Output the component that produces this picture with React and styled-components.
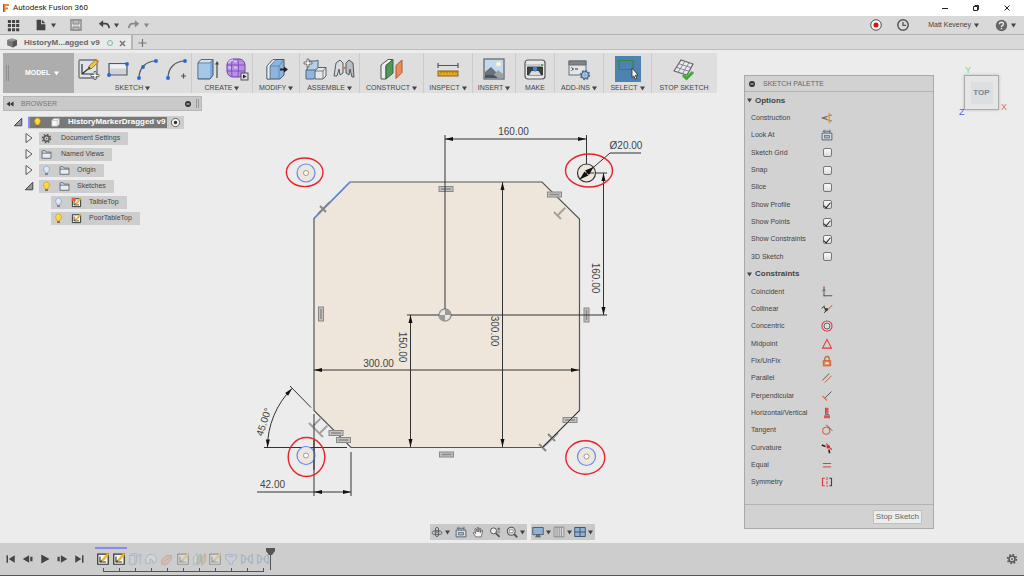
import React, { useState } from "react";
import styled, { createGlobalStyle } from "styled-components";

const GlobalStyle = createGlobalStyle`
  * {
    box-sizing: border-box;
  }

  body {
    margin: 0;
    background: #ececec;
    color: #444;
    font-family: "Liberation Sans", Arial, sans-serif;
    font-size: 7px;
    line-height: 8px;
  }

  button {
    padding: 0;
    border: 0;
    background: none;
    color: inherit;
    font: inherit;
    cursor: pointer;
  }

  ul {
    margin: 0;
    padding: 0;
    list-style: none;
  }

  svg {
    display: block;
    flex: none;
  }
`;

/* ---------- icons ---------- */

const Svg = ({ w = 16, h = w, box = 16, children }) => (
  <svg
    width={w}
    height={h}
    viewBox={`0 0 ${box} ${(box * h) / w}`}
    fill="none"
    stroke="#555"
    aria-hidden="true"
  >
    {children}
  </svg>
);

const Caret = () => (
  <svg width="5" height="5" viewBox="0 0 5 5" fill="currentColor" aria-hidden="true">
    <path d="M0 .5h5L2.5 4.500z" />
  </svg>
);

const Pencil = () => (
  <>
    <path d="M11 12.5l1-3.5 7-6.5 2.5 2.5-7 6.5z" fill="#f5c53c" stroke="#8a6a2a" strokeWidth=".8" />
    <path d="M11 12.5l1-3 2 2z" fill="#333" stroke="none" />
    <path d="M18 3.5l1.6-1.5 2.4 2.4-1.6 1.5z" fill="#d97b4a" stroke="none" />
  </>
);

const Node = ({ x, y }) => (
  <rect x={x - 1.7} y={y - 1.7} width="3.4" height="3.4" rx=".8" fill="#2563d8" stroke="none" />
);

const Plus = ({ x, y }) => (
  <path
    d={`M${x - 1} ${y - 4}h2v3h3v2h-3v3h-2v-3h-3v-2h3z`}
    fill="#fff"
    stroke="#555"
    strokeWidth=".8"
  />
);

const toolIcons = {
  sketch: (
    <>
      <rect x="2" y="3" width="18" height="18" rx="1" fill="#dfe4e9" stroke="#6d7278" strokeWidth="1.3" />
      <path d="M5 7v10h11M5 17l6-5" stroke="#333" strokeWidth="1.2" />
      <Pencil />
      <Plus x={18} y={18.5} />
    </>
  ),
  rect: (
    <>
      <path d="M3 6.5h18V18H3z" fill="#cfd4d9" stroke="#555a60" strokeWidth="1.2" />
      <path d="M4 7.500h16v4H4z" fill="#eef0f2" stroke="none" />
      <Node x={3} y={18} />
      <Node x={21} y={7} />
    </>
  ),
  arc: (
    <>
      <path d="M4 21C4 11 11 4 21 4" strokeWidth="1.2" />
      <Node x={4} y={21} />
      <Node x={8} y={10} />
      <Node x={21} y={4} />
    </>
  ),
  fillet: (
    <>
      <path d="M4 21C4 11 11 4 21 4M17 19h5M19.5 16.5v5" strokeWidth="1.2" />
      <Node x={4} y={21} />
      <Node x={21} y={4} />
    </>
  ),
  extrude: (
    <>
      <path d="M2 6l3-3.5h12V18l-3 4H2z" fill="#7faedb" stroke="#3d5670" />
      <path d="M2 6l3-3.5h12L14 6z" fill="#cfe1f2" stroke="#3d5670" strokeWidth=".7" />
      <path d="M2.5 6.5H14V21H2.5z" fill="#a5c8e9" stroke="none" />
      <path d="M21 21V6" strokeWidth="1.3" />
      <path d="M19 7.5L21 4l2 3.5z" fill="#444" stroke="none" />
    </>
  ),
  form: (
    <>
      <rect x="2" y="2" width="18" height="18" rx="6" fill="#b98fe6" stroke="#6b3fa5" />
      <path d="M7 3q-1 8 0 17M13 2.500q1 9 0 17M2 8h18M2 14h18" stroke="#7c4cba" strokeWidth=".9" />
      <path d="M3.5 6Q5 3 8 3M9 4.500h3M3 10.500h3M9 10.500h3" stroke="#e0c8fa" strokeWidth="1.5" />
      <rect x="16" y="16" width="7" height="7" fill="#ddd" stroke="#444" strokeWidth=".9" />
      <path d="M18 17.5l3.5 2-3.5 2z" fill="#222" stroke="none" />
    </>
  ),
  pressPull: (
    <>
      <path d="M3 9l6-6.5h11V18l-4 4H3z" fill="#8bb5de" stroke="#44566a" />
      <path d="M3 9l6-6.5h3L6 9v13H3z" fill="#eef1f4" stroke="#5b6570" strokeWidth=".8" />
      <path d="M6 9h9l5-6.500M15 9v13" stroke="#5a7da1" strokeWidth=".8" />
      <path d="M16 12.5h5" stroke="#222" strokeWidth="2" />
      <path d="M20 9.5l4 3-4 3z" fill="#222" stroke="none" />
    </>
  ),
  component: (
    <>
      <path d="M3 13l3-3h7v10l-2 2H3z" fill="#8fb6dc" stroke="#50657c" />
      <path d="M5 4h8l2-1v8l-2 2H4z" fill="#b7d0ea" stroke="#50657c" />
      <path d="M12 14l3-3.5h8V19l-3 3h-8z" fill="#e5e7ea" stroke="#5d6369" />
      <path d="M12 14h8l3-3.500M20 14v8" stroke="#5d6369" strokeWidth=".8" />
      <Plus x={5} y={6} />
    </>
  ),
  joint: (
    <>
      <path d="M2 19l2-13 4-3 3 3v10l-3 2-1-6-2 7z" fill="#d8dbdf" stroke="#54595f" />
      <path d="M22 20l-1-14-4-3-3 3v10l3 2 1-6 2 8z" fill="#b9bec5" stroke="#54595f" />
      <path d="M11 12l3-2" stroke="#df7430" strokeWidth="1.8" />
    </>
  ),
  plane: (
    <>
      <path d="M1 8l7-5.5h5L6 8.5V22H1z" fill="#eceef0" stroke="#555" />
      <path d="M6 8.5l7-6V16l-7 6z" fill="#4d9a58" stroke="#32683a" />
      <path d="M16 8.5l6-5.5v12.5l-6 6z" fill="#ef8b57" stroke="#a4593a" />
    </>
  ),
  measure: (
    <>
      <path d="M2 8.5h20M2 6v5M22 6v5" strokeWidth="1.2" />
      <rect x="2" y="14" width="20" height="5" fill="#e9a91d" stroke="#8a6410" />
      <path d="M5 14v2.500M8 14v2M11 14v2.500M14 14v2M17 14v2.500M20 14v2" stroke="#7a5506" strokeWidth=".7" />
    </>
  ),
  image: (
    <>
      <rect x="2" y="2" width="20" height="20" fill="#c3daee" stroke="#666b70" strokeWidth="1.3" />
      <path d="M3 15l6-5 7 7v4H3z" fill="#6a7178" stroke="none" />
      <path d="M9 21l7-8 5 4v4z" fill="#9aa1a8" stroke="none" />
      <path d="M3 18h9l4 3H3z" fill="#4c535a" stroke="none" />
      <circle cx="16.5" cy="7" r="2.3" fill="#fff6c9" stroke="none" />
    </>
  ),
  make: (
    <>
      <rect x="2" y="3" width="20" height="19" rx="3" fill="#e7e8ea" stroke="#55595d" strokeWidth="1.2" />
      <path d="M3 8h18" stroke="#999" strokeWidth=".8" />
      <path d="M4.5 10h15v8h-15z" fill="#3c4146" stroke="#222" strokeWidth=".8" />
      <path d="M6 18l2.500-4h7l2.500 4z" fill="#d9dbde" stroke="none" />
      <path d="M10 10h4v3l-2 2-2-2z" fill="#3e86cf" stroke="none" />
      <circle cx="19" cy="8" r="1" fill="#3ba33b" stroke="none" />
    </>
  ),
  script: (
    <>
      <rect x="2" y="4" width="17" height="14" fill="#e3e5e7" stroke="#6a7076" />
      <path d="M2 4h17v4H2z" fill="#7e858c" stroke="#666c72" />
      <path d="M4.5 10.5l2 1.500-2 1.500M8 12h3" stroke="#333" />
      <circle cx="18" cy="18" r="3.5" fill="#b9cfe6" stroke="#4c6f95" strokeWidth="1.5" />
      <circle cx="18" cy="18" r="4.5" stroke="#4c6f95" strokeWidth="1.5" strokeDasharray="1.7 1.8" />
      <circle cx="18" cy="18" r="1" fill="#fff" stroke="#4c6f95" strokeWidth=".7" />
    </>
  ),
  select: (
    <>
      <path d="M3 3.5h14v9H3z" stroke="#2d8b3f" strokeWidth="1.2" />
      <path d="M16 11l6 7-2.700.2 1.500 3.200-1.700.7-1.300-3.200-1.800 1.600z" fill="#fff" stroke="#333" strokeWidth=".9" />
    </>
  ),
  stop: (
    <>
      <path d="M2 14L9 3l12 4-6 11z" fill="#e9ebed" stroke="#62676c" strokeWidth="1.2" />
      <path d="M4.300 10.300l12.700 4M6.700 6.700L19 10.600M6 15.300L13 4.300M10.500 16.700L17 5.600" stroke="#7a7f84" strokeWidth=".9" />
      <path d="M11 18l3.500 3.500L21 15" stroke="#3faa2e" strokeWidth="3" />
    </>
  ),
};

const ToolIcon = ({ name }) => (
  <Svg w={24} box={24}>
    {toolIcons[name]}
  </Svg>
);

const smallIcons = {
  apps: (
    <path
      d="M2 2h3.300v3.300H2zM6.400 2h3.300v3.300H6.400zM10.800 2h3.300v3.300h-3.300zM2 6.400h3.300v3.300H2zM6.400 6.400h3.300v3.300H6.400zM10.800 6.400h3.300v3.300h-3.300zM2 10.800h3.300v3.300H2zM6.400 10.800h3.300v3.300H6.400zM10.800 10.800h3.300v3.300h-3.300z"
      fill="#444"
      stroke="none"
    />
  ),
  file: (
    <>
      <path d="M3 2h5v5h5v7H3z" fill="#444" stroke="none" />
      <path d="M9 2l4 4H9z" fill="#444" stroke="none" />
    </>
  ),
  save: (
    <>
      <path d="M3 3h10v10H3z" stroke="#888" strokeWidth="1.4" />
      <path d="M5 3h6v4H5zM5 10h6v3H5z" fill="#bbb" stroke="#888" />
    </>
  ),
  undo: (
    <>
      <path d="M5 6.5h5q3 0 4 5" stroke="#444" strokeWidth="2" />
      <path d="M7 2.5v8l-5-4z" fill="#444" stroke="none" />
    </>
  ),
  redo: (
    <>
      <path d="M11 6.5H6q-3 0-4 5" stroke="#888" strokeWidth="2" />
      <path d="M9 2.5v8l5-4z" fill="#888" stroke="none" />
    </>
  ),
  record: (
    <>
      <circle cx="8" cy="8" r="5.3" fill="#f4f4f4" />
      <circle cx="8" cy="8" r="2.5" fill="#e01010" stroke="none" />
    </>
  ),
  clock: (
    <>
      <circle cx="8" cy="8" r="5.2" strokeWidth="1.5" />
      <path d="M8 5v3.300h3" strokeWidth="1.3" />
    </>
  ),
  cube: (
    <>
      <path d="M1.5 4L8 2l6.500 2v7L9 14l-7.500-3z" fill="#777" stroke="none" />
      <path d="M1.5 4L8 2l6.500 2L9 6z" fill="#999" stroke="none" />
      <path d="M9 6l5.500-2v7L9 14z" fill="#555" stroke="none" />
    </>
  ),
  minus: (
    <>
      <circle cx="8" cy="8" r="6" fill="#333" stroke="none" />
      <path d="M5 8h6" stroke="#ddd" strokeWidth="2" />
    </>
  ),
  rewind: <path d="M8 3v10L1 8zM15 3v10L8 8z" fill="#333" stroke="none" />,
  closed: <path d="M4 2l8 6-8 6z" fill="#f4f4f4" strokeWidth="1.3" />,
  open: <path d="M13 3v10H3z" fill="#999" stroke="#444" strokeWidth="1.3" />,
  bulb: (
    <>
      <path d="M8 1.5a4.500 4.500 0 0 0-2.500 8L6 11.500h4l.5-2A4.500 4.500 0 0 0 8 1.500z" fill="#ffd93b" stroke="#c79a1c" />
      <path d="M6 12h4v2.500H6z" fill="#666" stroke="none" />
      <path d="M6.500 4.500l1-1" stroke="#fff" />
    </>
  ),
  bulbOff: (
    <>
      <path d="M8 1.5a4.500 4.500 0 0 0-2.500 8L6 11.500h4l.5-2A4.500 4.500 0 0 0 8 1.500z" fill="#dceafa" stroke="#7d9ac4" />
      <path d="M6 12h4v2.500H6z" fill="#777" stroke="none" />
    </>
  ),
  body: (
    <>
      <path d="M2.500 5l3-3h8v8.500l-3 3h-8z" fill="#f6f6f6" stroke="#aaa" />
      <path d="M2.500 5h8v8.500M10.500 5l3-3" stroke="#bbb" />
    </>
  ),
  folder: <path d="M1.500 13.500v-11H6l1.500 2h7v9zM1.500 6h13" fill="#e8ebef" stroke="#555d68" strokeWidth="1.2" />,
  gear: (
    <>
      <circle cx="8" cy="8" r="4" strokeWidth="2" />
      <circle cx="8" cy="8" r="6" strokeWidth="2" strokeDasharray="2.3 2.4" />
      <circle cx="8" cy="8" r="1.2" fill="#555" stroke="none" />
    </>
  ),
  sketchItem: (
    <>
      <path d="M2 2.500h12V14H2z" fill="#f4f6f8" stroke="#333" strokeWidth="1.4" />
      <path d="M4.500 5v6.500h7M5 11l4-3" stroke="#333" strokeWidth="1.2" />
      <path d="M7 10l7-8" stroke="#f0b41e" strokeWidth="2.6" />
    </>
  ),
  sketchFail: (
    <>
      <path d="M2 2.500h12V14H2z" fill="#f4f6f8" stroke="#333" strokeWidth="1.4" />
      <path d="M4.500 5v6.500h7M5 11l4-3" stroke="#333" strokeWidth="1.2" />
      <path d="M7 10l7-8" stroke="#f0b41e" strokeWidth="2.6" />
      <path d="M1 1h6v5H1z" fill="#d9643a" stroke="none" />
    </>
  ),
  target: (
    <>
      <circle cx="8" cy="8" r="6" fill="#f2f2f2" strokeWidth="1.3" />
      <circle cx="8" cy="8" r="2.5" fill="#333" stroke="none" />
    </>
  ),
  construction: (
    <>
      <path d="M14 4L2 8l12 4" stroke="#555" strokeWidth="1.4" />
      <path d="M11 1v14M8 6l6-2M8 10l6 2.500" stroke="#f09a35" strokeWidth="1.8" strokeDasharray="4 1" />
    </>
  ),
  lookAt: (
    <>
      <path d="M1.500 5.500h13v9h-13z" fill="#e1e6ec" stroke="#51606f" strokeWidth="1.3" />
      <path d="M4.500 8.500h7V12h-7z" fill="#aab8c6" stroke="#51606f" />
      <path d="M3 3h9M5 1L3 3l2 2M12 1v4" stroke="#51606f" strokeWidth="1.2" />
    </>
  ),
  coincident: (
    <>
      <path d="M4 2v11h11" strokeWidth="1.3" />
      <path d="M3.500 1h1v1h-1zM3.500 12.500h1v1h-1z" stroke="#e03a3a" />
      <path d="M2 7l2-3 2 3" strokeWidth="1" />
    </>
  ),
  collinear: (
    <>
      <path d="M1 7l4-3M4 13l6-5M4 5l3 5" stroke="#333" strokeWidth="1.3" />
      <path d="M5 7h4v3H5z" fill="#333" stroke="none" />
      <path d="M10 8l5-5" stroke="#e0603a" strokeWidth="1.4" />
    </>
  ),
  concentric: (
    <>
      <circle cx="8" cy="8" r="6.7" fill="#ddd" stroke="#e03a3a" strokeWidth="1.5" />
      <circle cx="8" cy="8" r="4" stroke="#50606f" strokeWidth="1.3" />
    </>
  ),
  midpoint: <path d="M8 2l6 11.500H2z" stroke="#e03a3a" strokeWidth="1.4" />,
  fix: (
    <>
      <path d="M5 8V5a3 3 0 0 1 6 0v3" stroke="#c96a35" strokeWidth="1.7" />
      <path d="M3 7.500h10v7H3z" fill="#e08a50" stroke="#b9562a" />
      <path d="M8 9.500v3M5.500 11h5" stroke="#fff" strokeWidth="1.2" />
    </>
  ),
  parallel: (
    <>
      <path d="M2 11l9-9" strokeWidth="1.3" />
      <path d="M5 14l9-9" stroke="#e0703a" strokeWidth="1.4" />
    </>
  ),
  perpendicular: (
    <>
      <path d="M5 11l9-9" strokeWidth="1.3" />
      <path d="M2 8l6 6" stroke="#e0703a" strokeWidth="1.5" />
    </>
  ),
  horizontal: (
    <>
      <path d="M6 1h4v8H6zM4 11h8v4H4z" fill="#e25555" stroke="none" />
      <path d="M6 1v9h5" stroke="#555" strokeWidth="1" />
    </>
  ),
  tangent: (
    <>
      <circle cx="7" cy="9" r="4.7" stroke="#e0603a" strokeWidth="1.4" />
      <path d="M7 1l8 8" strokeWidth="1.3" />
    </>
  ),
  curvature: (
    <>
      <path d="M1 4l5 2M10.500 10l1 5" stroke="#222" strokeWidth="2" />
      <path d="M7 2l8 9" stroke="#e02020" strokeWidth="1.5" strokeDasharray="3 1" />
      <path d="M7.500 4.500h4v4h-4z" fill="#e02020" stroke="none" />
    </>
  ),
  equal: <path d="M2.500 6h11M2.500 10.500h11" stroke="#e03a3a" strokeWidth="1.3" />,
  symmetry: (
    <>
      <path d="M5 3H2v10h3" stroke="#e03a3a" strokeWidth="1.5" />
      <path d="M8 1.500v13" stroke="#e03a3a" strokeWidth="1.3" strokeDasharray="4 1.5" />
      <path d="M11 3h3v10h-3" stroke="#444" strokeWidth="1.5" />
    </>
  ),
  orbit: (
    <>
      <ellipse cx="8" cy="9" rx="6.5" ry="2.7" strokeWidth="1.2" />
      <ellipse cx="8" cy="8" rx="2.4" ry="6.5" strokeWidth="1.2" />
      <circle cx="8" cy="8" r="1.5" fill="#3f92d8" stroke="none" />
    </>
  ),
  hand: (
    <path
      d="M5 14.500L1.500 9l1.500-.8L5 10 3.800 4l1.400-.5L7 8V2h1.600l.4 6 1.200-5 1.500.3L11 9l2-3.500 1.300.7-2 8.300z"
      fill="#f3f3f3"
      strokeWidth="1"
    />
  ),
  zoom: (
    <>
      <circle cx="6" cy="6.5" r="4" fill="#e7eef5" strokeWidth="1.3" />
      <path d="M9 9.500l5 5" strokeWidth="2.4" />
      <path d="M11 4h4M13 2v4M11 8h4" strokeWidth="1.1" />
    </>
  ),
  fit: (
    <>
      <circle cx="7" cy="7" r="5.3" fill="#dce5ee" strokeWidth="1.4" />
      <path d="M4.500 5h5v4h-5z" fill="#fff" stroke="#777" />
      <path d="M11 11l4 4" strokeWidth="2.4" />
    </>
  ),
  monitor: (
    <>
      <path d="M1 2h14v9.500H1z" fill="#8eb3d8" stroke="#53606d" strokeWidth="1.3" />
      <path d="M6 12h4v2H6zM4 14.500h8" fill="#888" />
    </>
  ),
  grid: <path d="M1.500 1.500h13v13h-13zM4 1.500v13M6.500 1.500v13M9 1.500v13M11.500 1.500v13" fill="#e3e3e3" stroke="#777" />,
  views: (
    <>
      <path d="M1 2h14v12H1z" fill="#8fb2da" stroke="#44566b" strokeWidth="1.3" />
      <path d="M8 2v12M1 8h14" stroke="#44566b" strokeWidth="1.3" />
    </>
  ),
  first: <path d="M2 3h2v10H2zM13 3v10L5 8z" fill="#444" stroke="none" />,
  prev: <path d="M9.500 3v10L1 8zM11 5h3v6h-3z" fill="#444" stroke="none" />,
  play: <path d="M3 2v12l11-6z" fill="#444" stroke="none" />,
  next: <path d="M6.500 3v10L15 8zM2 5h3v6H2z" fill="#444" stroke="none" />,
  last: <path d="M12 3h2v10h-2zM3 3v10l8-5z" fill="#444" stroke="none" />,
  tlExtrude: <path d="M2 4l2-2h6v10l-2 2H2zM2 4h6v10M14 14V4M12 5l2-3 2 3" fill="#c4d9ee" stroke="#5b7ea3" />,
  tlRevolve: <path d="M2 13V7l3-4h5q5 2 4 8l-4 2q1-5-3-5v5z" fill="#dfe6ee" stroke="#5b7ea3" />,
  tlPlane: <path d="M2 9l5-5h6v4l-5 6H2zM4 11l8-5" fill="#ef9e76" stroke="#777" />,
  tlSplit: (
    <>
      <path d="M2 6l4-4v9l-4 4z" fill="#eee" stroke="#777" />
      <path d="M6 6l4-4v9l-4 4z" fill="#7cb884" stroke="#518a5a" />
      <path d="M11 6l4-4v9l-4 4z" fill="#ef9e76" stroke="#a4593a" />
    </>
  ),
  tlLoft: <path d="M2 3h12v5l-4 3v3H6v-3L2 8zM5 5h6" fill="#c4d9ee" stroke="#5b7ea3" />,
  tlMirror: <path d="M2 3l4 2.500v5L2 13zM14 3l-4 2.500v5l4 2.500zM6 8h4" fill="#c4d9ee" stroke="#5b7ea3" strokeWidth="1.3" />,
};

const Icon = ({ name, size = 12 }) => <Svg w={size}>{smallIcons[name]}</Svg>;

/* ---------- window chrome ---------- */

const Shell = styled.div`
  display: flex;
  flex-direction: column;
  min-height: 100vh;
`;

const TitleBar = styled.header`
  display: flex;
  align-items: center;
  height: 16px;
  padding: 0 13px 0 2px;
  gap: 3px;
  background: #fff;
  color: #222;
  font-family: Roboto, "Noto Sans", sans-serif;
  font-size: 8px;
`;

const WindowTitle = styled.h1`
  flex: 1;
  margin: 0;
  font: inherit;
`;

const WindowButtons = styled.div`
  display: flex;
  gap: 23px;
`;

const QuickBar = styled.nav`
  display: flex;
  align-items: center;
  height: 19px;
  padding: 0 8px 0 6px;
  border-bottom: 1px solid #b0b0b0;
  background: #d9d9d9;
`;

const QuickButton = styled.button`
  display: flex;
  align-items: center;
  gap: 3px;
  margin-left: ${(props) => props.$gap || 0}px;
  color: ${(props) => (props.$dim ? "#888" : "#444")};
`;

const Spacer = styled.div`
  flex: 1;
`;

const TabStrip = styled.div`
  display: flex;
  align-items: stretch;
  height: 15px;
  border-bottom: 1px solid #bdbdbd;
  background: #d9d9d9;
`;

const DocTab = styled.div`
  display: flex;
  align-items: center;
  width: 133px;
  padding: 2px 5px 0 6px;
  border-right: 2px solid #b5b5b5;
  background: #e9e9e9;
  color: #666;
  font-size: 8px;
  font-weight: 700;
`;

const TabName = styled.span`
  flex: 1;
  margin-left: 6px;
  white-space: nowrap;
`;

const SyncDot = styled.span`
  width: 6px;
  height: 6px;
  margin-right: 6px;
  border: 1px solid #6cc4a4;
  border-radius: 50%;
`;

const NewTab = styled.button`
  padding-left: 5px;
`;

/* ---------- workspace ---------- */

const Workspace = styled.main`
  position: relative;
  flex: 1;
  display: flex;
  align-items: stretch;
`;

const ModelSide = styled.div`
  flex: 1;
  min-width: 0;
  display: flex;
  flex-direction: column;
  padding: 3px 0 0 3px;
`;

const Ribbon = styled.div`
  display: flex;
  align-self: flex-start;
  height: 40px;
  background: #dedede;
`;

const ModeButton = styled.button`
  display: flex;
  align-items: center;
  gap: 4px;
  width: 71px;
  padding-left: 3px;
  background: #adadad;
  color: #fff;
  font-weight: 700;
`;

const Grip = styled.span`
  width: 3px;
  height: 16px;
  margin-right: 12px;
  border: solid #8f8f8f;
  border-width: 0 1px;
`;

const ToolGroup = styled.section`
  display: flex;
  flex-direction: column;
  align-items: center;
  justify-content: space-between;
  width: ${(props) => props.$width}px;
  padding: 3px 0 1px;
  border-right: 1px solid ${(props) => (props.$last ? "transparent" : "#cbcbcb")};
`;

const Tools = styled.div`
  display: flex;
  gap: 3px;
`;

const ToolButton = styled.button`
  padding: 1px;
  background: ${(props) => (props.$active ? "#4e83b1" : "transparent")};
`;

const GroupLabel = styled.button`
  display: flex;
  align-items: center;
  gap: 2px;
  white-space: nowrap;
`;

const ModelRow = styled.div`
  flex: 1;
  display: flex;
  align-items: flex-start;
  padding-top: 3px;
`;

const Browser = styled.aside`
  width: 199px;
`;

const BrowserHead = styled.div`
  display: flex;
  align-items: center;
  height: 15px;
  margin-bottom: 3px;
  padding: 0 2px;
  border: 1px solid #b6b6b6;
  background: #c9c9c9;
  color: #777;
`;

const HeadTitle = styled.h2`
  flex: 1;
  margin: 0 0 0 7px;
  font-size: 7px;
  font-weight: 400;
`;

const HeadGrip = styled.span`
  width: 3px;
  height: 9px;
  margin-left: 4px;
  border: solid #999;
  border-width: 0 1px;
`;

const TreeRow = styled.li`
  display: flex;
  align-items: center;
  gap: 4px;
  height: 16px;
  padding-left: ${(props) => props.$indent}px;
`;

const Chip = styled.div`
  display: flex;
  align-items: center;
  height: 13px;
  padding: 0 8px 0 2px;
  gap: ${(props) => (props.$wide ? 9 : 7)}px;
  background: #cdcdcd;
  white-space: nowrap;
`;

const RootChip = styled(Chip)`
  padding: 0 3px 0 0;
  gap: 3px;
`;

const RootName = styled.div`
  display: flex;
  align-items: center;
  gap: 7px;
  height: 11px;
  padding: 0 2px;
  border-left: 2px solid #8a8af0;
  background: #787878;
  color: #fff;
  font-size: 8px;
  font-weight: 700;
`;

const CanvasDrawing = styled.svg`
  flex: 1;
  min-width: 0;
  height: 428px;
  font-size: 10px;
`;

/* ---------- sketch palette ---------- */

const Palette = styled.aside`
  display: flex;
  flex-direction: column;
  width: 190px;
  margin: 25px 0 14px;
  border: 1px solid #a9a9a9;
  background: #d2d2d2;
`;

const PaletteHead = styled.div`
  display: flex;
  align-items: center;
  height: 16px;
  padding-left: 3px;
  border-bottom: 1px solid #b3b3b3;
  color: #666;
`;

const PaletteBody = styled.div`
  flex: 1;
  display: flex;
  flex-direction: column;
  padding-bottom: 13px;
`;

const PaletteSection = styled.section`
  display: flex;
  flex-direction: column;
  flex: ${(props) => props.$rows} 1 auto;
`;

const SectionTitle = styled.h3`
  flex: 1 1 17px;
  display: flex;
  align-items: center;
  gap: 3px;
  margin: 0;
  padding-left: 2px;
  font-size: 8px;
`;

const OptionRow = styled.label`
  flex: 1 1 17px;
  display: grid;
  grid-template-columns: 69px 14px;
  align-items: center;
  justify-items: center;
  padding-left: 6px;

  span {
    justify-self: start;
    white-space: nowrap;
  }
`;

const Check = styled.input`
  appearance: none;
  display: grid;
  place-items: center;
  width: 9px;
  height: 9px;
  margin: 0;
  border: 1px solid #777;
  border-radius: 2px;
  background: linear-gradient(#fafafa, #dcdcdc);

  &:checked::after {
    content: "";
    width: 3px;
    height: 6px;
    border: solid #222;
    border-width: 0 1px 1px 0;
    transform: rotate(40deg);
  }
`;

const PaletteFoot = styled.div`
  display: flex;
  justify-content: flex-end;
  align-items: center;
  height: 24px;
  padding-right: 11px;
  border-top: 1px solid #b3b3b3;
`;

const StopButton = styled.button`
  height: 14px;
  padding: 0 2px;
  border: 1px solid #c0c0c0;
  background: #ededed;
  color: #666;
  font-size: 8px;
`;

/* ---------- view cube ---------- */

const CubeSide = styled.div`
  width: 90px;
  padding: 25px 0 0 30px;
`;

const Cube = styled.button`
  position: relative;
  display: grid;
  place-items: center;
  width: 35px;
  height: 35px;
  border: 1px solid #aaa;
  background: #e6e6e6;
  box-shadow: 0 0 3px #bbb;
`;

const CubeFace = styled.span`
  display: grid;
  place-items: center;
  width: 22px;
  height: 22px;
  background: #dcdfe2;
  color: #7b8490;
  font-size: 8px;
  font-weight: 700;
`;

const Axis = styled.span`
  position: absolute;
  left: ${(props) => props.$x}px;
  top: ${(props) => props.$y}px;
  color: ${(props) => props.$color};
  font-size: 9px;
`;

/* ---------- navigation + timeline ---------- */

const NavDock = styled.div`
  position: absolute;
  left: 0;
  right: 0;
  bottom: 3px;
  display: flex;
  justify-content: center;
  gap: 4px;
  pointer-events: none;
`;

const NavGroup = styled.div`
  display: flex;
  align-items: center;
  gap: ${(props) => props.$gap}px;
  height: 16px;
  padding: 0 2px 0 1px;
  background: #c9c9c9;
  pointer-events: auto;
`;

const NavButton = styled.button`
  display: flex;
  align-items: center;
  gap: 2px;
`;

const Timeline = styled.footer`
  display: flex;
  align-items: center;
  height: 33px;
  padding: 0 6px 0 5px;
  border-bottom: 1px solid #555;
  background: #cdcdcd;
`;

const Playback = styled.div`
  display: flex;
  gap: 5px;
`;

const Track = styled.div`
  position: relative;
  margin-left: 10px;
`;

const Steps = styled.ul`
  display: flex;
`;

const Step = styled.li`
  width: 16px;
  padding: 3px 1px 2px;
  border-top: 2px solid ${(props) => (props.$current ? "#8a8af0" : "transparent")};

  button {
    display: block;
    opacity: ${(props) => (props.$current ? 1 : 0.35)};
  }
`;

const Marker = styled.div`
  position: absolute;
  left: 171px;
  top: 0;
`;

/* ---------- data ---------- */

const groups = [
  { label: "SKETCH", width: 118, tools: ["sketch", "rect", "arc", "fillet"], menu: true },
  { label: "CREATE", width: 61, tools: ["extrude", "form"], menu: true },
  { label: "MODIFY", width: 47, tools: ["pressPull"], menu: true },
  { label: "ASSEMBLE", width: 60, tools: ["component", "joint"], menu: true },
  { label: "CONSTRUCT", width: 64, tools: ["plane"], menu: true },
  { label: "INSPECT", width: 49, tools: ["measure"], menu: true },
  { label: "INSERT", width: 43, tools: ["image"], menu: true },
  { label: "MAKE", width: 39, tools: ["make"] },
  { label: "ADD-INS", width: 49, tools: ["script"], menu: true },
  { label: "SELECT", width: 48, tools: ["select"], menu: true, active: true },
  { label: "STOP SKETCH", width: 65, tools: ["stop"], last: true },
];

const tree = [
  { name: "Document Settings", arrow: "closed", icons: ["gear"] },
  { name: "Named Views", arrow: "closed", icons: ["folder"] },
  { name: "Origin", arrow: "closed", icons: ["bulbOff", "folder"] },
  { name: "Sketches", arrow: "open", icons: ["bulb", "folder"] },
  { name: "TalbleTop", icons: ["bulbOff", "sketchFail"] },
  { name: "PoorTableTop", icons: ["bulb", "sketchItem"] },
];

const constraints = [
  ["Coincident", "coincident"],
  ["Collinear", "collinear"],
  ["Concentric", "concentric"],
  ["Midpoint", "midpoint"],
  ["Fix/UnFix", "fix"],
  ["Parallel", "parallel"],
  ["Perpendicular", "perpendicular"],
  ["Horizontal/Vertical", "horizontal"],
  ["Tangent", "tangent"],
  ["Curvature", "curvature"],
  ["Equal", "equal"],
  ["Symmetry", "symmetry"],
];

const steps = [
  "sketchItem",
  "sketchItem",
  "tlExtrude",
  "tlRevolve",
  "tlPlane",
  "sketchItem",
  "tlSplit",
  "sketchItem",
  "tlLoft",
  "tlMirror",
  "tlMirror",
];

/* ---------- sketch ---------- */

const Arrow = ({ x, y, angle = 0 }) => (
  <path
    d="M0 0l-8-2v4z"
    transform={`translate(${x} ${y}) rotate(${angle})`}
    fill="#111"
    stroke="none"
  />
);

const Hole = ({ x, y }) => (
  <>
    <circle cx={x} cy={y} r="9" fill="#eee6db" stroke="#5f8af2" strokeWidth="1.2" />
    <circle cx={x} cy={y} r="2.5" fill="#fff" stroke="#999" />
  </>
);

const Bar = ({ x, y, angle = 0 }) => (
  <g transform={`translate(${x} ${y}) rotate(${angle})`} stroke="#888">
    <rect x="-7" y="-2.5" width="14" height="5" fill="#c4c2be" />
    <path d="M-5 0H5" strokeWidth="1.5" />
  </g>
);

const Perp = ({ x, y, angle }) => (
  <path
    d="M-5 5H5M0 5v-11"
    transform={`translate(${x} ${y}) rotate(${angle})`}
    stroke="#a5a29e"
    strokeWidth="2"
  />
);

const DimText = ({ x, y, angle = 0, children }) => (
  <text
    transform={`translate(${x} ${y}) rotate(${angle})`}
    textAnchor="middle"
    fill="#444"
    stroke="none"
  >
    {children}
  </text>
);

const SketchDrawing = () => (
  <CanvasDrawing
    viewBox="202 96 542 428"
    preserveAspectRatio="xMidYMin meet"
    fill="none"
    stroke="#333"
    role="img"
    aria-label="Table top sketch"
  >
    <path
      d="M314 218.5L350 182H542L579.5 219V410.5L542.5 447.5H351L314 410.5z"
      fill="#eee6db"
      stroke="#555"
      strokeWidth="1.2"
    />
    <path d="M314 218.5L350 182" stroke="#5f8af2" strokeWidth="1.5" />
    <Bar x={446} y={189} />
    <Bar x={446.5} y={454.5} />
    <Bar x={554.5} y={194.5} />
    <Bar x={570} y={420} />
    <Bar x={336} y={433} />
    <Bar x={343.5} y={440} />
    <Bar x={321} y={314} angle={90} />
    <Bar x={586.5} y={315} angle={90} />
    <Perp x={561} y={212} angle={45} />
    <Perp x={316} y={423} angle={45} />
    <Perp x={323} y={430} angle={45} />
    <path d="M318 214l12-12M320 206l6 6M539 444l7 7M548 434l7 7M543 447l15-14" stroke="#888" strokeWidth="2" />
    <path d="M542.5 447.5l37-37" />

    <circle cx="445" cy="315" r="6" fill="#e8e4de" stroke="#999" strokeWidth="1.5" />
    <path d="M445 309a6 6 0 0 1 6 6h-6zM445 321a6 6 0 0 1-6-6h6z" fill="#999" stroke="none" />

    <path d="M445 135v174M586.5 135v35M445 139h141.500" />
    <path d="M590 173h17M451 315h156M603.5 173v142M407 315h32" />
    <path d="M502.5 182v265M410.5 315v132M314 370h265.500" />
    <path d="M314 414v82M351 452v44M257 492h94" />
    <path d="M264 447.5h83M290 386l21 21.500M267.5 447.5A83.500 83.500 0 0 1 292 388.500" />
    <Arrow x={445} y={139} angle={180} />
    <Arrow x={586} y={139} />
    <Arrow x={603.5} y={173} angle={-90} />
    <Arrow x={603.5} y={315} angle={90} />
    <Arrow x={502.5} y={182} angle={-90} />
    <Arrow x={502.5} y={447} angle={90} />
    <Arrow x={410.5} y={315} angle={-90} />
    <Arrow x={410.5} y={447} angle={90} />
    <Arrow x={314} y={370} angle={180} />
    <Arrow x={579} y={370} />
    <Arrow x={314} y={492} angle={180} />
    <Arrow x={351} y={492} />
    <Arrow x={267.5} y={447.5} angle={93} />
    <Arrow x={292} y={388.5} angle={-48} />

    <circle cx="586.5" cy="173" r="9" fill="#eee6db" stroke="#333" strokeWidth="1.2" />
    <path d="M580 179l30-26h31M586 173h8" />
    <path d="M579.5 179.500l5-8 4 4zM593.5 167l-8.500 3.500 4 4.500z" fill="#111" stroke="none" />

    <Hole x={306} y={173} />
    <Hole x={306} y={455.5} />
    <Hole x={586.5} y={456.5} />
    <path d="M314 440v30" />

    <g stroke="#e8222c" strokeWidth="1.4">
      <ellipse cx="304.7" cy="172.3" rx="18.3" ry="14.3" />
      <ellipse cx="589" cy="170.5" rx="23.5" ry="16.5" />
      <ellipse cx="306.5" cy="457" rx="18.3" ry="19.5" />
      <ellipse cx="585.3" cy="457.5" rx="19.5" ry="16.7" />
    </g>

    <DimText x={513.5} y={135}>160.00</DimText>
    <DimText x={626} y={149}>Ø20.00</DimText>
    <DimText x={378.5} y={367}>300.00</DimText>
    <DimText x={272.5} y={488}>42.00</DimText>
    <DimText x={592} y={278} angle={90}>160.00</DimText>
    <DimText x={491} y={331} angle={90}>300.00</DimText>
    <DimText x={399} y={347} angle={90}>150.00</DimText>
    <DimText x={267} y={423} angle={-72}>45.00°</DimText>
  </CanvasDrawing>
);

/* ---------- parts ---------- */

const TopBars = () => (
  <>
    <TitleBar>
      <Svg w={8} h={10} box={8}>
        <path d="M1 1h6v2H3.500v1.500H6v2H3.500V9H1z" fill="#ef8a2f" stroke="none" />
        <path d="M1 1h1.200v8H1z" fill="#b8561a" stroke="none" />
      </Svg>
      <WindowTitle>Autodesk Fusion 360</WindowTitle>
      <WindowButtons>
        <button aria-label="Minimize">
          <Svg w={8} box={8}><path d="M1 4.500h6" stroke="#222" /></Svg>
        </button>
        <button aria-label="Restore">
          <Svg w={8} box={8}><path d="M1.500 2.500h4v4h-4zM3 2.500v-1h3.500v4h-1" stroke="#222" /></Svg>
        </button>
        <button aria-label="Close">
          <Svg w={8} box={8}><path d="M1.500 1.500l5 5M6.500 1.500l-5 5" stroke="#222" /></Svg>
        </button>
      </WindowButtons>
    </TitleBar>
    <QuickBar>
      <QuickButton aria-label="Data panel"><Icon name="apps" size={15} /></QuickButton>
      <QuickButton aria-label="File" $gap={13}><Icon name="file" size={14} /><Caret /></QuickButton>
      <QuickButton aria-label="Save" $gap={12}><Icon name="save" size={16} /></QuickButton>
      <QuickButton aria-label="Undo" $gap={13}><Icon name="undo" size={14} /><Caret /></QuickButton>
      <QuickButton aria-label="Redo" $gap={8} $dim><Icon name="redo" size={14} /><Caret /></QuickButton>
      <Spacer />
      <QuickButton aria-label="Record"><Icon name="record" size={16} /></QuickButton>
      <QuickButton aria-label="Job status" $gap={11}><Icon name="clock" size={16} /></QuickButton>
      <QuickButton $gap={17}>Matt Keveney <Caret /></QuickButton>
      <QuickButton aria-label="Help" $gap={16}>
        <Svg w={13}>
          <circle cx="8" cy="8" r="7" fill="#666" stroke="none" />
          <path d="M5.500 6.500Q5.500 4 8 4t2.500 2.300Q10.500 7.800 8 9v1M8 11v1.700" stroke="#eee" strokeWidth="1.6" />
        </Svg>
        <Caret />
      </QuickButton>
    </QuickBar>
    <TabStrip>
      <DocTab>
        <Icon name="cube" />
        <TabName>HistoryM...agged v9</TabName>
        <SyncDot />
        <button aria-label="Close tab">
          <Svg w={7} box={7}><path d="M1 1l5 5M6 1L1 6" stroke="#777" strokeWidth="1.5" /></Svg>
        </button>
      </DocTab>
      <NewTab aria-label="New tab">
        <Svg w={9} box={9}><path d="M4.500 1v8M.5 5h8" stroke="#777" strokeWidth="1.2" /></Svg>
      </NewTab>
    </TabStrip>
  </>
);

const RibbonBar = () => (
  <Ribbon>
    <ModeButton>
      <Grip />
      MODEL <Caret />
    </ModeButton>
    {groups.map((group) => (
      <ToolGroup key={group.label} $width={group.width} $last={group.last}>
        <Tools>
          {group.tools.map((tool) => (
            <ToolButton key={tool} aria-label={tool} $active={group.active}>
              <ToolIcon name={tool} />
            </ToolButton>
          ))}
        </Tools>
        <GroupLabel>
          {group.label}
          {group.menu && <Caret />}
        </GroupLabel>
      </ToolGroup>
    ))}
  </Ribbon>
);

const BrowserPanel = () => (
  <Browser>
    <BrowserHead>
      <Icon name="rewind" size={8} />
      <HeadTitle>BROWSER</HeadTitle>
      <Icon name="minus" size={8} />
      <HeadGrip />
    </BrowserHead>
    <ul>
      <TreeRow $indent={9}>
        <Icon name="open" size={12} />
        <RootChip>
          <RootName>
            <Icon name="bulb" size={11} />
            <Icon name="body" size={11} />
            HistoryMarkerDragged v9
          </RootName>
          <Icon name="target" size={11} />
        </RootChip>
      </TreeRow>
      {tree.map((node) => (
        <TreeRow key={node.name} $indent={node.arrow ? 20 : 48}>
          {node.arrow && <Icon name={node.arrow} size={12} />}
          <Chip $wide={node.icons.length === 1}>
            {node.icons.map((icon) => (
              <Icon key={icon} name={icon} size={11} />
            ))}
            {node.name}
          </Chip>
        </TreeRow>
      ))}
    </ul>
  </Browser>
);

const SketchPalette = () => {
  const [options, setOptions] = useState({
    "Sketch Grid": false,
    Snap: false,
    Slice: false,
    "Show Profile": true,
    "Show Points": true,
    "Show Constraints": true,
    "3D Sketch": false,
  });
  const toggle = (name) => setOptions({ ...options, [name]: !options[name] });

  return (
    <Palette>
      <PaletteHead>
        <Icon name="minus" size={8} />
        <HeadTitle>SKETCH PALETTE</HeadTitle>
      </PaletteHead>
      <PaletteBody>
        <PaletteSection $rows={10}>
          <SectionTitle><Caret />Options</SectionTitle>
          <OptionRow>
            <span>Construction</span>
            <button><Icon name="construction" /></button>
          </OptionRow>
          <OptionRow>
            <span>Look At</span>
            <button><Icon name="lookAt" /></button>
          </OptionRow>
          {Object.keys(options).map((name) => (
            <OptionRow key={name}>
              <span>{name}</span>
              <Check type="checkbox" checked={options[name]} onChange={() => toggle(name)} />
            </OptionRow>
          ))}
        </PaletteSection>
        <PaletteSection $rows={13}>
          <SectionTitle><Caret />Constraints</SectionTitle>
          {constraints.map(([name, icon]) => (
            <OptionRow key={name}>
              <span>{name}</span>
              <button><Icon name={icon} /></button>
            </OptionRow>
          ))}
        </PaletteSection>
      </PaletteBody>
      <PaletteFoot>
        <StopButton>Stop Sketch</StopButton>
      </PaletteFoot>
    </Palette>
  );
};

const NavBar = () => (
  <NavDock>
    <NavGroup $gap={5}>
      <NavButton aria-label="Orbit"><Icon name="orbit" /><Caret /></NavButton>
      <NavButton aria-label="Look at"><Icon name="lookAt" /></NavButton>
      <NavButton aria-label="Pan"><Icon name="hand" /></NavButton>
      <NavButton aria-label="Zoom"><Icon name="zoom" /></NavButton>
      <NavButton aria-label="Fit"><Icon name="fit" /><Caret /></NavButton>
    </NavGroup>
    <NavGroup $gap={2}>
      <NavButton aria-label="Display settings"><Icon name="monitor" /><Caret /></NavButton>
      <NavButton aria-label="Grid and snaps"><Icon name="grid" /><Caret /></NavButton>
      <NavButton aria-label="Viewports"><Icon name="views" /><Caret /></NavButton>
    </NavGroup>
  </NavDock>
);

const TimelineBar = () => (
  <Timeline>
    <Playback>
      {["first", "prev", "play", "next", "last"].map((name) => (
        <button key={name} aria-label={name}><Icon name={name} size={12} /></button>
      ))}
    </Playback>
    <Track>
      <Steps>
        {steps.map((icon, index) => (
          <Step key={index} $current={index < 2}>
            <button aria-label={`Feature ${index + 1}`}><Icon name={icon} size={14} /></button>
          </Step>
        ))}
      </Steps>
      <svg width="176" height="4" stroke="#555" fill="none" aria-hidden="true">
        <path d="M8 3.500h161" />
        <path d="M8 2h161" strokeWidth="4" strokeDasharray="1 15" />
      </svg>
      <Marker>
        <svg width="9" height="24" viewBox="0 0 9 24" fill="#555" aria-hidden="true">
          <path d="M0 1h9v3L6 8H5v15H4V8H3L0 4z" />
        </svg>
      </Marker>
    </Track>
    <Spacer />
    <button aria-label="Timeline settings"><Icon name="gear" size={12} /></button>
  </Timeline>
);

export default function App() {
  return (
    <Shell>
      <GlobalStyle />
      <TopBars />
      <Workspace>
        <ModelSide>
          <RibbonBar />
          <ModelRow>
            <BrowserPanel />
            <SketchDrawing />
          </ModelRow>
        </ModelSide>
        <SketchPalette />
        <CubeSide>
          <Cube>
            <CubeFace>TOP</CubeFace>
            <Axis $x={0} $y={-10} $color="#6fe06f">Y</Axis>
            <Axis $x={36} $y={27} $color="#ee6a6a">X</Axis>
            <Axis $x={-6} $y={32} $color="#5a5aee">Z</Axis>
          </Cube>
        </CubeSide>
        <NavBar />
      </Workspace>
      <TimelineBar />
    </Shell>
  );
}
